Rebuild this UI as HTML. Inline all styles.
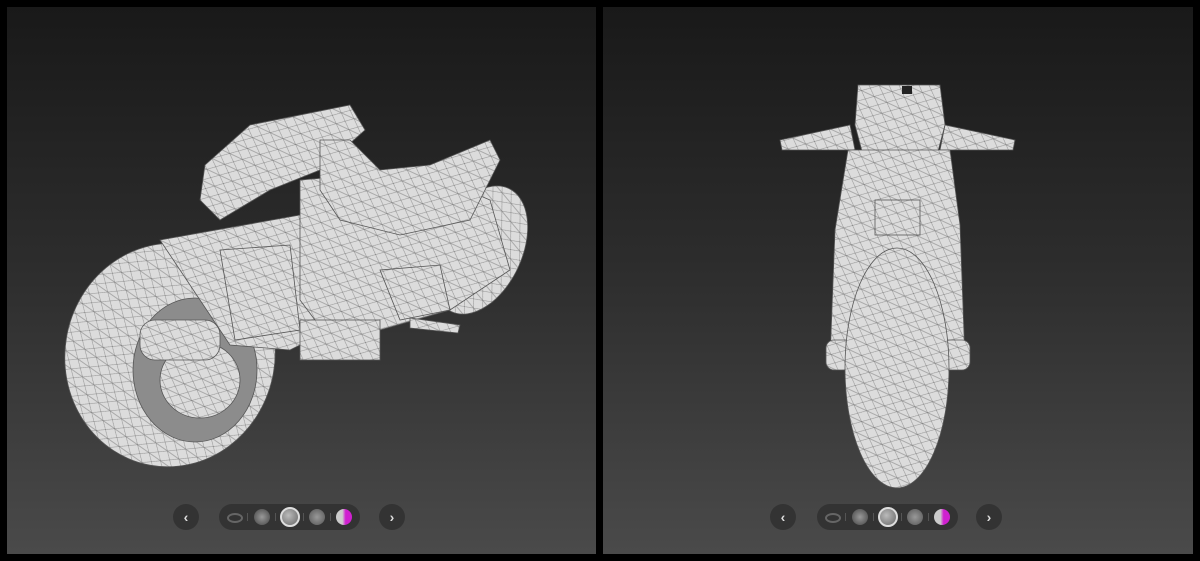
<!DOCTYPE html>
<html><head><style>
body{margin:0;width:1200px;height:561px;background:#000;position:relative;overflow:hidden;font-family:"Liberation Sans",sans-serif}
.p{position:absolute;top:7px;height:547px;background:linear-gradient(#191919,#2e2e2e 50%,#4a4a4a)}
.btn{position:absolute;width:26px;height:26px;border-radius:50%;background:#333;color:#ddd;font-size:14px;line-height:26px;text-align:center;font-weight:bold}
.pill{position:absolute;width:141px;height:26px;border-radius:13px;background:#333}
.b{position:absolute;top:5px;width:16px;height:16px;border-radius:50%}
.sep{position:absolute;top:9px;width:1px;height:8px;background:#555}
</style></head><body>
<div class="p" style="left:7px;width:589px"></div>
<div class="p" style="left:603px;width:590px"></div>

<svg width="1200" height="561" style="position:absolute;left:0;top:0">
<defs><pattern id="w" width="14" height="12" patternUnits="userSpaceOnUse" patternTransform="rotate(25)"><rect width="14" height="12" fill="#dcdcdc"/><path d="M0 0L14 12M0 12L14 0M0 6H14" stroke="#777" stroke-width="0.5" fill="none"/></pattern></defs>
<g fill="url(#w)" stroke="#555" stroke-width="0.8">
<ellipse cx="170" cy="355" rx="105" ry="112" transform="rotate(10 170 355)"/>
<ellipse cx="195" cy="370" rx="62" ry="72" fill="#8c8c8c"/>
<ellipse cx="200" cy="380" rx="40" ry="38"/>
<rect x="140" y="320" width="80" height="40" rx="15"/>
<ellipse cx="480" cy="250" rx="42" ry="68" transform="rotate(25 480 250)"/>
<polygon points="160,240 300,215 340,250 330,330 290,350 230,345 200,300"/>
<polygon points="220,250 290,245 300,330 235,340"/>
<polygon points="300,180 420,170 490,200 510,270 450,310 380,330 330,340 300,300"/>
<polygon points="205,165 250,125 350,105 365,130 320,170 270,190 220,220 200,200"/>
<polygon points="320,140 350,140 380,170 430,165 490,140 500,160 470,220 400,235 340,220 320,190"/>
<polygon points="380,270 440,265 450,310 400,320"/>
<rect x="300" y="320" width="80" height="40"/>
<polygon points="410,318 460,325 458,333 410,328"/>
<polygon points="858,85 940,85 945,125 925,200 875,200 855,125"/>
<polygon points="780,140 850,125 855,150 782,150"/>
<polygon points="1015,140 945,125 940,150 1013,150"/>
<polygon points="848,150 950,150 960,225 965,360 830,360 835,230"/>
<rect x="826" y="340" width="40" height="30" rx="8"/>
<rect x="930" y="340" width="40" height="30" rx="8"/>
<ellipse cx="897" cy="368" rx="52" ry="120"/>
<rect x="875" y="200" width="45" height="35"/>
</g>
<rect x="902" y="86" width="10" height="8" fill="#222"/>
</svg>

<div class="btn" style="left:173px;top:504px">&lsaquo;</div>
<div class="pill" style="left:219px;top:504px">
<div class="b" style="left:8px;border:2px solid #666;height:6px;top:9px;width:12px;border-radius:50%"></div>
<div class="sep" style="left:28px"></div>
<div class="b" style="left:35px;background:radial-gradient(#999,#444)"></div>
<div class="sep" style="left:56px"></div>
<div class="b" style="left:61px;background:radial-gradient(circle at 40% 40%,#bbb,#666);border:2px solid #ddd;top:3px"></div>
<div class="sep" style="left:84px"></div>
<div class="b" style="left:90px;background:radial-gradient(#999,#555)"></div>
<div class="sep" style="left:111px"></div>
<div class="b" style="left:117px;background:linear-gradient(90deg,#ccc 40%,#d020d0 60%)"></div>
</div>
<div class="btn" style="left:379px;top:504px">&rsaquo;</div>

<div class="btn" style="left:770px;top:504px">&lsaquo;</div>
<div class="pill" style="left:817px;top:504px">
<div class="b" style="left:8px;border:2px solid #666;height:6px;top:9px;width:12px;border-radius:50%"></div>
<div class="sep" style="left:28px"></div>
<div class="b" style="left:35px;background:radial-gradient(#999,#444)"></div>
<div class="sep" style="left:56px"></div>
<div class="b" style="left:61px;background:radial-gradient(circle at 40% 40%,#bbb,#666);border:2px solid #ddd;top:3px"></div>
<div class="sep" style="left:84px"></div>
<div class="b" style="left:90px;background:radial-gradient(#999,#555)"></div>
<div class="sep" style="left:111px"></div>
<div class="b" style="left:117px;background:linear-gradient(90deg,#ccc 40%,#d020d0 60%)"></div>
</div>
<div class="btn" style="left:976px;top:504px">&rsaquo;</div>
</body></html>
